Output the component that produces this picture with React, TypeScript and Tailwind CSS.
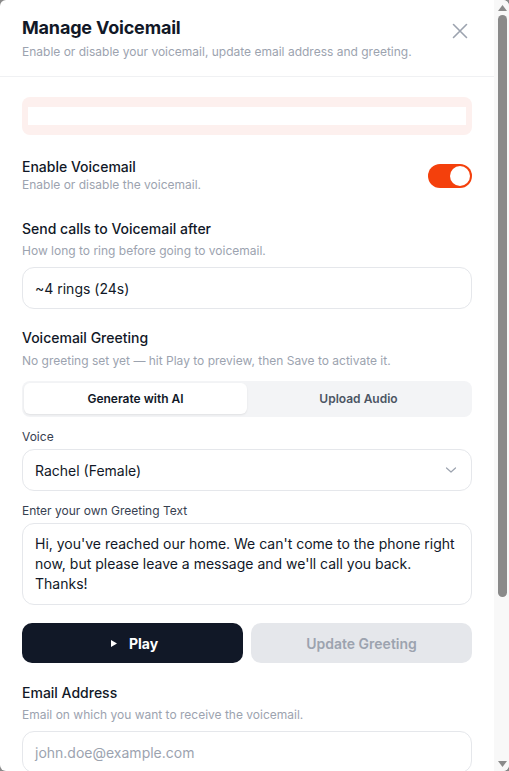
import React from "react";

const font = { fontFamily: "Inter, 'Noto Sans', sans-serif" };

function FakeScrollbar() {
  return (
    <div className="flex h-full w-[15px] shrink-0 flex-col bg-[#f8f8f8]">
      <div className="flex h-[15px] items-center justify-center pl-[2px]">
        <svg width="9" height="6" viewBox="0 0 9 6" fill="#8a8a8a">
          <path d="M4.5 0L9 6H0z" />
        </svg>
      </div>
      <div className="ml-[4px] h-[582px] w-[9px] rounded-full bg-[#8a8a8a]" />
      <div className="flex-1" />
      <div className="flex h-[15px] items-center justify-center pl-[2px]">
        <svg width="9" height="6" viewBox="0 0 9 6" fill="#8a8a8a">
          <path d="M0 0h9L4.5 6z" />
        </svg>
      </div>
    </div>
  );
}

export default function App() {
  return (
    <div className="h-[771px] w-[509px] bg-[#8a8a8a]" style={font}>
      <div className="flex h-full w-full overflow-hidden rounded-[6px] bg-white text-[#111827]">
        <div className="h-full w-[494px] shrink-0 overflow-hidden">
          {/* Header */}
          <div className="relative border-b border-[#f0f1f3] px-[22px] pt-[16px] pb-[14px]">
            <h2 className="text-[18px] font-bold leading-[24px] tracking-[-0.01em]">Manage Voicemail</h2>
            <p className="mt-[2px] text-[12px] leading-[20px] text-[#9ca3af]">
              Enable or disable your voicemail, update email address and greeting.
            </p>
            <button className="absolute right-[26px] top-[23px] text-[#9ca3af]">
              <svg width="16" height="16" viewBox="0 0 16 16" fill="none" stroke="currentColor" strokeWidth="1.6" strokeLinecap="round">
                <path d="M1.5 1.5l13 13M14.5 1.5l-13 13" />
              </svg>
            </button>
          </div>

          {/* Body */}
          <div className="px-[22px] pt-[20px]">
            <div className="rounded-lg bg-[#fdf0ee] px-[6px] py-[10px]">
              <div className="h-[18px] bg-white" />
            </div>

            <div className="mt-[22px] flex items-center justify-between">
              <div>
                <div className="text-[14px] font-medium leading-[20px]">Enable Voicemail</div>
                <div className="text-[12px] leading-[16px] text-[#9ca3af]">Enable or disable the voicemail.</div>
              </div>
              <div className="mt-[2px] flex h-[24px] w-[44px] items-center justify-end rounded-full bg-[#f4400c] p-[2px]">
                <div className="h-[20px] w-[20px] rounded-full bg-white" />
              </div>
            </div>

            <div className="mt-[26px]">
              <div className="text-[14px] font-medium leading-[20px]">Send calls to Voicemail after</div>
              <div className="mt-[4px] text-[12px] leading-[16px] text-[#9ca3af]">How long to ring before going to voicemail.</div>
              <div className="mt-[8px] flex h-[42px] items-center rounded-xl border border-[#e5e7eb] px-[12px] text-[14px]">
                ~4 rings (24s)
              </div>
            </div>

            <div className="mt-[19px]">
              <div className="text-[14px] font-medium leading-[20px]">Voicemail Greeting</div>
              <div className="mt-[5px] text-[12px] leading-[16px] text-[#9ca3af]">
                No greeting set yet — hit Play to preview, then Save to activate it.
              </div>
              <div className="mt-[12px] grid h-[36px] grid-cols-2 rounded-lg bg-[#f3f4f6] px-[2px] pt-[2px] pb-[3px]">
                <div className="flex items-center justify-center rounded-md bg-white text-[12px] font-semibold shadow-[0_1px_2px_rgba(0,0,0,0.08)]">
                  Generate with AI
                </div>
                <div className="flex items-center justify-center text-[12px] font-semibold text-[#4b5563]">Upload Audio</div>
              </div>

              <div className="mt-[12px] text-[12px] leading-[16px] text-[#374151]">Voice</div>
              <div className="mt-[4px] flex h-[42px] items-center justify-between rounded-xl border border-[#e5e7eb] pl-[12px] pr-[14px] text-[14px]">
                <span>Rachel (Female)</span>
                <svg width="12" height="8" viewBox="0 0 12 8" fill="none" stroke="#9ca3af" strokeWidth="1.2" strokeLinecap="round" strokeLinejoin="round">
                  <path d="M1.5 2l4.5 4 4.5-4" />
                </svg>
              </div>

              <div className="mt-[12px] text-[12px] leading-[16px] text-[#374151]">Enter your own Greeting Text</div>
              <div className="mt-[4px] h-[82px] rounded-xl border border-[#e5e7eb] px-[12px] pt-[10px] text-[14px] leading-[20px]">
                Hi, you've reached our home. We can't come to the phone right now, but please leave a message and we'll call you back. Thanks!
              </div>

              <div className="mt-[18px] grid grid-cols-2 gap-[8px]">
                <button className="flex h-[40px] items-center justify-center gap-[12px] rounded-[10px] bg-[#111827] pl-[4px] text-[14px] font-bold text-white">
                  <svg width="6" height="7" viewBox="0 0 6 7" fill="white">
                    <path d="M0 0l6 3.5L0 7z" />
                  </svg>
                  Play
                </button>
                <button className="flex h-[40px] items-center justify-center rounded-[10px] bg-[#e5e7eb] text-[14px] font-semibold text-[#9ca3af]">
                  Update Greeting
                </button>
              </div>
            </div>

            <div className="mt-[20px]">
              <div className="text-[14px] font-medium leading-[20px]">Email Address</div>
              <div className="mt-[4px] text-[12px] leading-[16px] text-[#9ca3af]">Email on which you want to receive the voicemail.</div>
              <div className="mt-[8px] flex h-[42px] items-center rounded-xl border border-[#e5e7eb] px-[12px] text-[14px] text-[#9ca3af]">
                john.doe@example.com
              </div>
            </div>
          </div>
        </div>
        <FakeScrollbar />
      </div>
    </div>
  );
}
